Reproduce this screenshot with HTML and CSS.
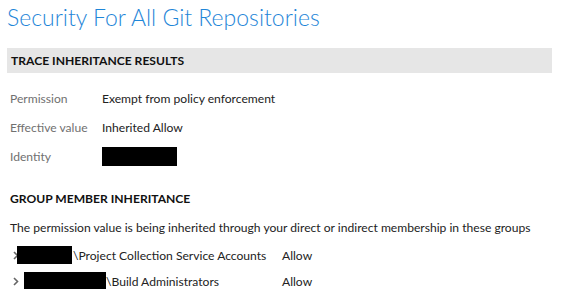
FILE: index.html
```html
<!DOCTYPE html>
<html>
<head>
<meta charset="utf-8">
<link rel="stylesheet" href="styles.css">
</head>
<body>
<h1 class="title">Security For All Git Repositories</h1>
<div class="bar">TRACE INHERITANCE RESULTS</div>
<div class="props">
  <div class="label">Permission</div><div class="value">Exempt from policy enforcement</div>
  <div class="label">Effective value</div><div class="value">Inherited Allow</div>
  <div class="label">Identity</div><div class="value"><span class="redact redact-id"></span></div>
</div>
<h2 class="section">GROUP MEMBER INHERITANCE</h2>
<p class="desc">The permission value is being inherited through your direct or indirect membership in these groups</p>
<div class="groups">
  <div class="group">
    <svg class="chev" width="6" height="9" viewBox="0 0 6 9"><path d="M1 1 L4.5 4.5 L1 8" fill="none" stroke="#666" stroke-width="1.6"/></svg>
    <span class="name"><span class="redact redact-1"></span>\Project Collection Service Accounts</span>
    <span class="perm">Allow</span>
  </div>
  <div class="group">
    <svg class="chev" width="6" height="9" viewBox="0 0 6 9"><path d="M1 1 L4.5 4.5 L1 8" fill="none" stroke="#666" stroke-width="1.6"/></svg>
    <span class="name"><span class="redact redact-2"></span>\Build Administrators</span>
    <span class="perm">Allow</span>
  </div>
</div>
</body>
</html>
```
FILE: styles.css
```css
html, body { margin: 0; padding: 0; background: #fff; }
body {
  font-family: "Lato", "Open Sans", sans-serif;
  font-size: 12.1px;
  color: #222;
  padding: 0 0 0 7px;
  width: 560px;
}
.title {
  margin: 0;
  padding-top: 2px;
  font-size: 23px;
  font-weight: 300;
  color: #1f86d8;
  line-height: 30px;
}
.bar {
  margin-top: 16px;
  width: 545px;
  background: #e6e6e6;
  height: 25px;
  line-height: 25px;
  padding-left: 4px;
  box-sizing: border-box;
  font-weight: 700;
  color: #111;
}
.props {
  display: grid;
  grid-template-columns: 92px auto;
  grid-auto-rows: 29px;
  align-items: center;
  margin-top: 11px;
  padding-left: 3px;
}
.label { color: #707070; }
.value { color: #222; display: flex; align-items: center; }
.redact { display: inline-block; background: #000; flex: none; }
.redact-id { width: 75px; height: 19px; }
.section {
  margin: 20px 0 0 3px;
  font-size: 12.1px;
  font-weight: 700;
  color: #111;
  line-height: 16px;
}
.desc { margin: 13px 0 0 3px; line-height: 16px; white-space: nowrap; }
.groups { margin-top: 6px; padding-left: 6px; }
.group { display: flex; align-items: center; height: 26px; }
.chev { width: 6px; height: 9px; flex: none; }
.name { width: 263px; flex: none; display: flex; align-items: center; white-space: nowrap; }
.redact-1 { width: 55px; height: 18px; margin-left: -2px; margin-right: 1px; }
.redact-2 { width: 82px; height: 18px; margin-left: 5px; }
.perm { flex: none; }
```
